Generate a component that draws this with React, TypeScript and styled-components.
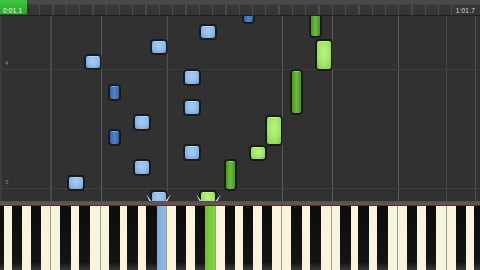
import React from "react";
import styled, { createGlobalStyle, css } from "styled-components";

const GlobalStyle = createGlobalStyle`
  html, body {
    margin: 0;
    padding: 0;
    background: #303030;
    overflow: hidden;
  }
  * {
    box-sizing: border-box;
  }
`;

const KEY_W = 16.5;
const KEY_START = -15;
const WHITE_NAMES = ["C", "D", "E", "F", "G", "A", "B"];
const BLACK_OFFSET: Record<string, number> = { C: 9, D: 11.5, F: 8.5, G: 10, A: 12.5 };

type Hand = "left" | "right";

const keyX = (i: number) => KEY_START + i * KEY_W;

const Screen = styled.div`
  width: 480px;
  height: 270px;
  display: flex;
  flex-direction: column;
  background: #303030;
  font-family: "Liberation Sans", Arial, sans-serif;
  overflow: hidden;
`;

const TopBar = styled.div`
  height: 16px;
  display: flex;
  align-items: stretch;
  background: linear-gradient(#4a4a4a 0, #4a4a4a 4px, #383838 5px, #343434 15px, #1f1f1f 15px);
`;

const Progress = styled.div`
  width: 27px;
  display: flex;
  align-items: flex-end;
  padding: 0 0 2px 3px;
  background: linear-gradient(#3fc43f, #2aa82a 14px, #1f1f1f 15px);
`;

const Ticks = styled.div`
  flex: 1;
  background: repeating-linear-gradient(
    90deg,
    transparent 0,
    transparent 12px,
    rgba(95, 95, 95, 0.5) 12px,
    rgba(95, 95, 95, 0.5) 13.3px
  );
  background-size: 100% 10px;
  background-position: 0 5px;
  background-repeat: no-repeat;
`;

const TimeLabel = styled.span<{ $dim?: boolean }>`
  font-size: 6.5px;
  line-height: 7px;
  color: ${(p) => (p.$dim ? "#d8d8d8" : "#f4fff4")};
  letter-spacing: 0.2px;
`;

const EndTime = styled.div`
  display: flex;
  align-items: flex-end;
  padding: 0 5px 2px 4px;
`;

const Roll = styled.div`
  position: relative;
  height: 185px;
  background: #313131;
  border-left: 2px solid #3c3c3c;
  overflow: hidden;
`;

const GridLine = styled.div<{ $x: number; $o: number }>`
  position: absolute;
  top: 0;
  bottom: 0;
  left: ${(p) => p.$x}px;
  width: 1.5px;
  background: rgba(95, 95, 95, ${(p) => p.$o});
`;

const MeasureLine = styled.div<{ $y: number }>`
  position: absolute;
  left: 0;
  right: 0;
  top: ${(p) => p.$y}px;
  height: 1px;
  background: #3e3e3e;
`;

const MeasureNum = styled.span<{ $y: number }>`
  position: absolute;
  left: 3px;
  top: ${(p) => p.$y}px;
  font-size: 6px;
  color: #8a8a8a;
`;

const noteSkins = {
  leftWhite: css`
    background: radial-gradient(ellipse at 50% 40%, #a9cdf2 0, #8fbbe9 55%, #6b99d2 100%);
  `,
  leftBlack: css`
    background: linear-gradient(90deg, #3562a4, #4f85c8 50%, #3562a4);
  `,
  rightWhite: css`
    background: radial-gradient(ellipse at 50% 40%, #bdf288 0, #a2e664 55%, #80cc3e 100%);
  `,
  rightBlack: css`
    background: linear-gradient(90deg, #4b9425, #6cbb3b 50%, #4b9425);
  `,
};

const Note = styled.div<{ $skin: keyof typeof noteSkins }>`
  position: absolute;
  border-radius: 3px;
  border: 1px solid #161b22;
  box-shadow: 0 0 0 1px rgba(0, 0, 0, 0.45), inset 0 1px 0 rgba(255, 255, 255, 0.3);
  ${(p) => noteSkins[p.$skin]}
`;

const Splash = styled.svg`
  position: absolute;
  overflow: visible;
`;

const KeyboardEdge = styled.div`
  height: 5px;
  background: linear-gradient(#525252, #5c5c5c 4px, #7c1f1f 4px);
`;

const Keys = styled.div`
  flex: 1;
  display: flex;
  margin-left: ${KEY_START}px;
`;

const WhiteKey = styled.div<{ $pressed?: Hand }>`
  position: relative;
  flex: 0 0 ${KEY_W}px;
  border-right: 1px solid #a09c8a;
  background: ${(p) =>
    p.$pressed === "left"
      ? "linear-gradient(90deg, #6f9fd4, #8ebbe8)"
      : p.$pressed === "right"
      ? "linear-gradient(90deg, #62b52c, #86d43f)"
      : "#f8f4de"};
`;

const BlackKey = styled.div<{ $left: number }>`
  position: absolute;
  top: 0;
  bottom: 0;
  left: ${(p) => p.$left}px;
  width: 10.5px;
  z-index: 1;
  background: linear-gradient(#0c0c0c, #141414 88%, #383838);
`;

const gridLines = [
  { x: 48, o: 0.55 },
  { x: 98.5, o: 0.95 },
  { x: 164.5, o: 0.75 },
  { x: 279.5, o: 0.85 },
  { x: 329.5, o: 0.9 },
  { x: 395.5, o: 0.9 },
  { x: 443.5, o: 0.4 },
  { x: 472.5, o: 0.7 },
];

type NoteData = { key: number; black?: boolean; hand: Hand; top: number; bottom: number };

const notes: NoteData[] = [
  { key: 5, hand: "left", top: 160, bottom: 174 },
  { key: 6, hand: "left", top: 39, bottom: 53 },
  { key: 7, black: true, hand: "left", top: 69, bottom: 84 },
  { key: 7, black: true, hand: "left", top: 114, bottom: 129 },
  { key: 9, hand: "left", top: 99, bottom: 114 },
  { key: 9, hand: "left", top: 144, bottom: 159 },
  { key: 10, hand: "left", top: 24, bottom: 38 },
  { key: 10, hand: "left", top: 175, bottom: 190 },
  { key: 12, hand: "left", top: 54, bottom: 69 },
  { key: 12, hand: "left", top: 84, bottom: 99 },
  { key: 12, hand: "left", top: 129, bottom: 144 },
  { key: 13, hand: "left", top: 9, bottom: 23 },
  { key: 15, black: true, hand: "left", top: -3, bottom: 7 },
  { key: 13, hand: "right", top: 175, bottom: 190 },
  { key: 14, black: true, hand: "right", top: 144, bottom: 174 },
  { key: 16, hand: "right", top: 130, bottom: 144 },
  { key: 17, hand: "right", top: 100, bottom: 129 },
  { key: 18, black: true, hand: "right", top: 54, bottom: 98 },
  { key: 19, black: true, hand: "right", top: -3, bottom: 21 },
  { key: 20, hand: "right", top: 24, bottom: 54 },
];

const noteLeft = (n: NoteData) => {
  const x = keyX(n.key) - 2;
  if (!n.black) return x + 0.5;
  const name = WHITE_NAMES[(n.key + 3) % 7];
  return x + BLACK_OFFSET[name];
};

// little spray where a falling note meets its key
const SplashMark = ({ x, color }: { x: number; color: string }) => (
  <Splash style={{ left: x - 4, top: 176 }} width="25" height="9" viewBox="0 0 25 9">
    <path d="M0 2 L3.5 9 L5.5 9 Z" fill={color} opacity="0.9" />
    <path d="M25 2 L21.5 9 L19.5 9 Z" fill={color} opacity="0.9" />
  </Splash>
);

const whiteKeys = Array.from({ length: 31 }, (_, i) => {
  const name = WHITE_NAMES[(i + 3) % 7];
  const pressed: Hand | undefined = i === 10 ? "left" : i === 13 ? "right" : undefined;
  return { i, name, pressed };
});

const App = () => {
  return (
    <Screen>
      <GlobalStyle />
      <TopBar>
        <Progress>
          <TimeLabel>0:01.1</TimeLabel>
        </Progress>
        <Ticks />
        <EndTime>
          <TimeLabel $dim>1:01.7</TimeLabel>
        </EndTime>
      </TopBar>
      <Roll>
        {gridLines.map((g) => (
          <GridLine key={g.x} $x={g.x} $o={g.o} />
        ))}
        <MeasureLine $y={53} />
        <MeasureLine $y={172} />
        <MeasureNum $y={44}>4</MeasureNum>
        <MeasureNum $y={163}>3</MeasureNum>
        {notes.map((n, idx) => (
          <Note
            key={idx}
            $skin={`${n.hand}${n.black ? "Black" : "White"}` as keyof typeof noteSkins}
            style={{
              left: noteLeft(n),
              top: n.top,
              width: n.black ? 11 : 16,
              height: n.bottom - n.top,
            }}
          />
        ))}
        <SplashMark x={keyX(10) - 2} color="#d6e9fb" />
        <SplashMark x={keyX(13) - 2} color="#dcf8b8" />
      </Roll>
      <KeyboardEdge />
      <Keys>
        {whiteKeys.map((k) => (
          <WhiteKey key={k.i} $pressed={k.pressed}>
            {BLACK_OFFSET[k.name] !== undefined && <BlackKey $left={BLACK_OFFSET[k.name]} />}
          </WhiteKey>
        ))}
      </Keys>
    </Screen>
  );
};

export default App;
